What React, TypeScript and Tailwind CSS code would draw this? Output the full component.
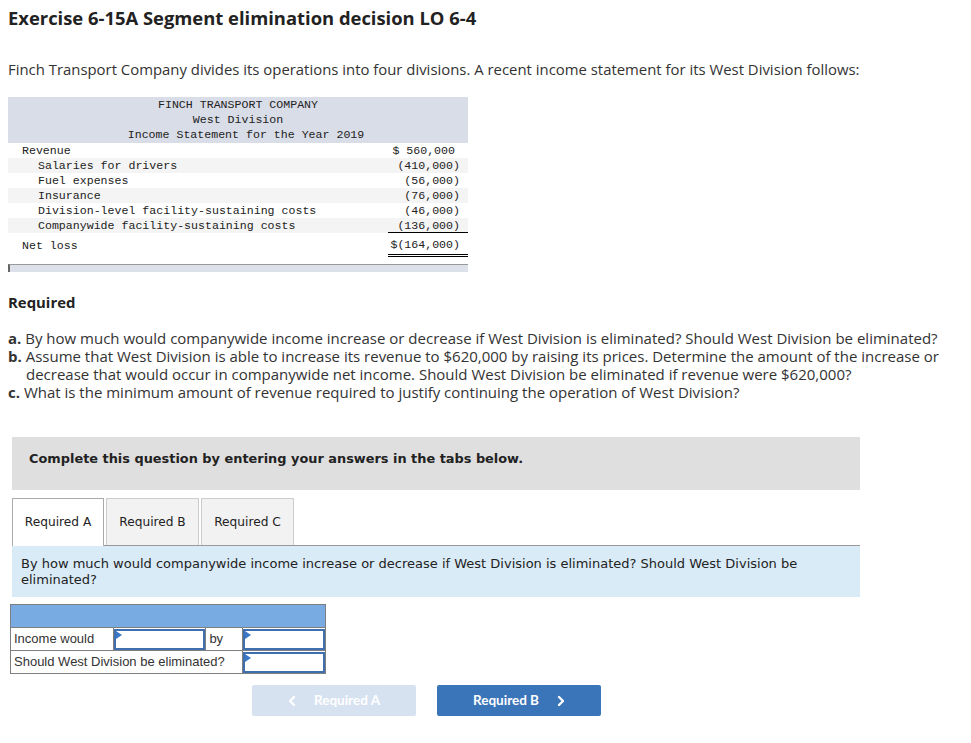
import { ChevronLeft, ChevronRight } from "lucide-react";

const statementRows = [
  { label: "Revenue", amount: "$ 560,000", indent: false, paren: false, shaded: false },
  { label: "Salaries for drivers", amount: "(410,000)", indent: true, paren: true, shaded: true },
  { label: "Fuel expenses", amount: "(56,000)", indent: true, paren: true, shaded: false },
  { label: "Insurance", amount: "(76,000)", indent: true, paren: true, shaded: true },
  { label: "Division-level facility-sustaining costs", amount: "(46,000)", indent: true, paren: true, shaded: false },
  { label: "Companywide facility-sustaining costs", amount: "(136,000)", indent: true, paren: true, shaded: true },
];

function AnswerInput() {
  return (
    <div className="relative h-[21px] w-full border-2 border-[#3f6fae] bg-white">
      <span className="absolute left-0 top-0 h-0 w-0 border-l-[6px] border-t-[4px] border-b-[4px] border-l-[#3a78c8] border-t-transparent border-b-transparent" />
    </div>
  );
}

function IncomeStatement() {
  return (
    <div className="w-[460px] font-['Liberation_Mono',monospace] text-[11.6px] leading-[15px] text-[#222]">
      <div className="bg-[#d9dde7] pb-[1px] text-center">
        <div>FINCH TRANSPORT COMPANY</div>
        <div>West Division</div>
        <div className="pl-[16px]">Income Statement for the Year 2019</div>
      </div>
      {statementRows.map((row, i) => (
        <div key={row.label} className={`flex h-[15px] ${row.shaded ? "bg-[#f4f4f4]" : "bg-white"}`}>
          <div className={`flex-1 ${row.indent ? "pl-[30px]" : "pl-[14px]"}`}>{row.label}</div>
          <div
            className={`w-[80px] text-right ${row.paren ? "pr-[8px]" : "pr-[13px]"} ${
              i === statementRows.length - 1 ? "border-b border-black" : ""
            }`}
          >
            {row.amount}
          </div>
        </div>
      ))}
      <div className="flex h-[24px] bg-white">
        <div className="flex-1 pl-[14px] pt-[5px]">Net loss</div>
        <div className="w-[80px] border-b-[3px] border-double border-black pr-[8px] pt-[4px] text-right">$(164,000)</div>
      </div>
      <div className="mt-[7px] h-[8px] border-l-2 border-t border-l-[#666] border-t-[#999] bg-[#dde1ea]" />
    </div>
  );
}

export default function App() {
  return (
    <div className="min-h-screen w-[971px] bg-white px-2 font-['Open_Sans',sans-serif] text-[#333]">
      <h1 className="pt-[6px] text-[18.4px] font-bold leading-[24px] text-[#222]">
        Exercise 6-15A Segment elimination decision LO 6-4
      </h1>

      <p className="mt-[29px] text-[14.9px] leading-[20px]">
        Finch Transport Company divides its operations into four divisions. A recent income statement for its West
        Division follows:
      </p>

      <div className="mt-[18px]">
        <IncomeStatement />
      </div>

      <h2 className="mt-[20px] text-[14.9px] font-bold leading-[20px] text-[#222]">Required</h2>

      <ol className="mt-[17px] text-[15px] leading-[18px]">
        <li className="pl-[18px] -indent-[18px]">
          <span className="font-bold">a.</span> By how much would companywide income increase or decrease if West
          Division is eliminated? Should West Division be eliminated?
        </li>
        <li className="pl-[18px] -indent-[18px]">
          <span className="font-bold">b.</span> Assume that West Division is able to increase its revenue to $620,000 by
          raising its prices. Determine the amount of the increase or decrease that would occur in companywide net
          income. Should West Division be eliminated if revenue were $620,000?
        </li>
        <li className="pl-[18px] -indent-[18px]">
          <span className="font-bold">c.</span> What is the minimum amount of revenue required to justify continuing the
          operation of West Division?
        </li>
      </ol>

      <div className="ml-[4px] mt-[36px] h-[53px] w-[848px] bg-[#dfdfdf] pl-[17px] pt-[13px] font-['DejaVu_Sans',sans-serif] text-[12.9px] font-bold leading-[18px] text-[#222]">
        Complete this question by entering your answers in the tabs below.
      </div>

      <div className="ml-[4px] mt-[8px] w-[848px] font-['DejaVu_Sans',sans-serif]">
        <div className="flex items-end border-b border-[#999]">
          <div className="-mb-[1px] flex h-[48px] w-[92px] items-center justify-center border border-b-0 border-[#aaa] bg-white text-[12.2px] text-[#222]">
            Required A
          </div>
          <div className="ml-[2px] flex h-[47px] w-[93px] items-center justify-center border border-b-0 border-[#ccc] bg-[#f2f2f2] text-[12.2px] text-[#222]">
            Required B
          </div>
          <div className="ml-[2px] flex h-[47px] w-[93px] items-center justify-center border border-b-0 border-[#ccc] bg-[#f2f2f2] text-[12.2px] text-[#222]">
            Required C
          </div>
        </div>
        <div className="h-[51px] bg-[#daebf8] pl-[9px] pr-[30px] pt-[10px] text-[13px] leading-[16px] text-[#222]">
          By how much would companywide income increase or decrease if West Division is eliminated? Should West Division
          be eliminated?
        </div>
      </div>

      <table className="ml-[2px] mt-[7px] w-[316px] border-collapse font-['Liberation_Sans',sans-serif] text-[13px] text-[#333]">
        <tbody>
          <tr className="h-[23px] bg-[#78abe1]">
            <td colSpan={4} className="border border-[#7f7f7f]" />
          </tr>
          <tr className="h-[23px]">
            <td className="w-[103px] border border-[#7f7f7f] pl-[3px]">Income would</td>
            <td className="w-[93px] border border-[#7f7f7f] p-0">
              <AnswerInput />
            </td>
            <td className="w-[37px] border border-[#7f7f7f] pl-[3px]">by</td>
            <td className="w-[83px] border border-[#7f7f7f] p-0">
              <AnswerInput />
            </td>
          </tr>
          <tr className="h-[23px]">
            <td colSpan={3} className="border border-[#7f7f7f] pl-[3px]">
              Should West Division be eliminated?
            </td>
            <td className="border border-[#7f7f7f] p-0">
              <AnswerInput />
            </td>
          </tr>
        </tbody>
      </table>

      <div className="ml-[244px] mt-[11px] flex gap-[21px] font-['Lato',sans-serif] text-[13.5px] font-bold">
        <button className="flex h-[31px] w-[164px] items-center justify-center gap-[14px] rounded-[2px] bg-[#d7e2f1] pr-[4px] text-white">
          <ChevronLeft size={16} strokeWidth={3.5} />
          Required A
        </button>
        <button className="flex h-[31px] w-[164px] items-center justify-center gap-[14px] rounded-[2px] bg-[#3a74b9] pl-[4px] text-white">
          Required B
          <ChevronRight size={16} strokeWidth={3.5} />
        </button>
      </div>
    </div>
  );
}
